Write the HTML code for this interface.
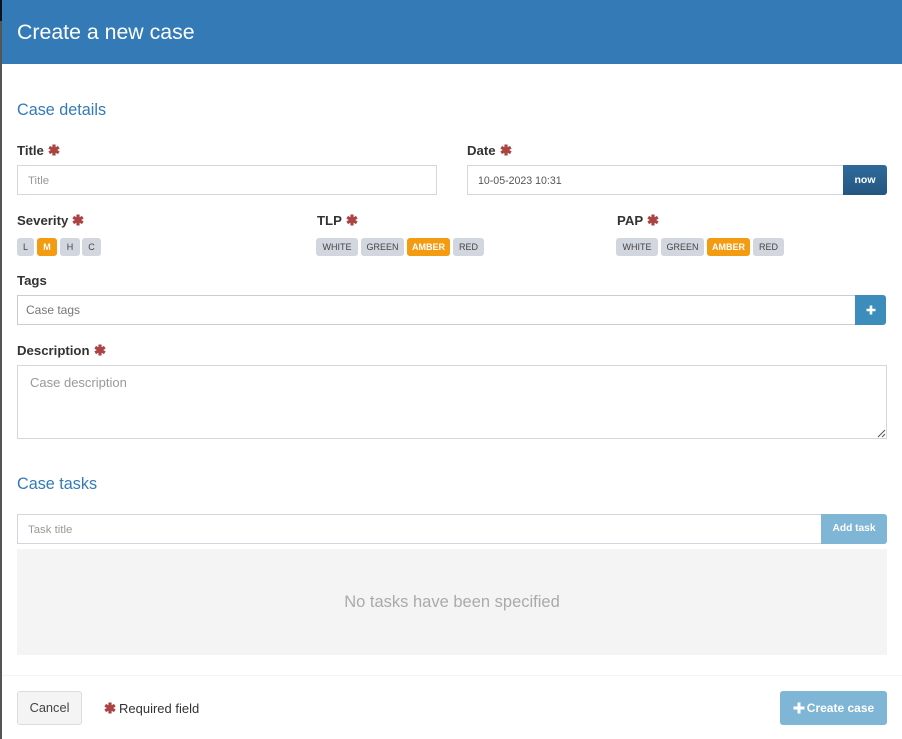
<!DOCTYPE html>
<html><head><meta charset="utf-8"><style>
*{box-sizing:border-box}
html,body{margin:0;padding:0;width:902px;height:739px;overflow:hidden;background:#fff;font-family:"Liberation Sans",sans-serif}
.a{position:absolute;white-space:nowrap}
.t{display:flex;align-items:center;line-height:1}
.lb{font-weight:bold;font-size:13.2px;color:#333;height:20px;margin-top:1px}
.h{font-size:16.2px;color:#337ab7;height:24px}
.in{background:#fff;border:1px solid #d2d6de;height:30px;display:flex;align-items:center;color:#999;font-size:11.4px;padding-top:1px}
.p{top:238px;height:18px;border-radius:3px;background:#d2d6de;color:#444;font-size:9px;display:flex;align-items:center;justify-content:center}
.on{background:#f39c12;color:#fff;font-weight:bold}
.r{display:inline-block;margin-left:4px;position:relative;top:-1px}
</style></head><body>
<div class="a" style="left:0;top:0;width:2px;height:739px;background:#555"></div>
<div class="a" style="left:0;top:0;width:2px;height:21px;background:#0a1420"></div>
<div class="a" style="left:2px;top:0;width:900px;height:64px;background:#337ab7"></div>
<div class="a t" style="left:2px;top:1px;width:900px;height:63px;color:#fff;font-size:21.3px;padding-left:15px">Create a new case</div>

<svg width="0" height="0" style="position:absolute"><defs><g id="s"><path d="M6 0.5V11.5M1.2 3.2L10.8 8.8M10.8 3.2L1.2 8.8" stroke="#a94442" stroke-width="3.2" fill="none"/></g></defs></svg>

<div class="a t h" style="left:17px;top:98px">Case details</div>

<div class="a t lb" style="left:17px;top:140px">Title<svg class="r" width="12" height="12"><use href="#s"/></svg></div>
<div class="a in" style="left:17px;top:165px;width:420px;padding-left:10px">Title</div>

<div class="a t lb" style="left:467px;top:140px">Date<svg class="r" width="12" height="12"><use href="#s"/></svg></div>
<div class="a in" style="left:467px;top:165px;width:377px;padding-left:10px;color:#555;font-size:10.6px">10-05-2023 10:31</div>
<div class="a t" style="left:843px;top:165px;width:44px;height:30px;background:linear-gradient(#2f6a9c,#24567f);border-radius:0 3px 3px 0;color:#fff;font-size:10.5px;font-weight:bold;justify-content:center">now</div>

<div class="a t lb" style="left:17px;top:210px">Severity<svg class="r" width="12" height="12"><use href="#s"/></svg></div>
<div class="a p" style="left:17px;width:17px">L</div>
<div class="a p on" style="left:37px;width:20px">M</div>
<div class="a p" style="left:60px;width:20px">H</div>
<div class="a p" style="left:82px;width:19px">C</div>

<div class="a t lb" style="left:317px;top:210px">TLP<svg class="r" width="12" height="12"><use href="#s"/></svg></div>
<div class="a p" style="left:316px;width:42px">WHITE</div>
<div class="a p" style="left:361px;width:43px">GREEN</div>
<div class="a p on" style="left:407px;width:43px">AMBER</div>
<div class="a p" style="left:453px;width:31px">RED</div>

<div class="a t lb" style="left:617px;top:210px">PAP<svg class="r" width="12" height="12"><use href="#s"/></svg></div>
<div class="a p" style="left:616px;width:42px">WHITE</div>
<div class="a p" style="left:661px;width:43px">GREEN</div>
<div class="a p on" style="left:707px;width:43px">AMBER</div>
<div class="a p" style="left:753px;width:31px">RED</div>

<div class="a t lb" style="left:17px;top:270px">Tags</div>
<div class="a in" style="left:17px;top:295px;width:839px;padding:0 0 0 8px;border-color:#ccc;color:#777;font-size:12px">Case tags</div>
<div class="a t" style="left:855px;top:295px;width:31px;height:30px;background:#3c8dbc;border-radius:0 3px 3px 0;justify-content:center"><svg width="10" height="10"><path d="M5 0.5V9.5M0.5 5H9.5" stroke="#fff" stroke-width="2.6"/></svg></div>

<div class="a t lb" style="left:17px;top:340px">Description<svg class="r" width="12" height="12"><use href="#s"/></svg></div>
<div class="a in" style="left:17px;top:365px;width:870px;height:74px;padding:9px 0 0 12px;align-items:flex-start;font-size:13px">Case description</div>
<svg class="a" style="left:876px;top:428px" width="10" height="10"><path d="M9 2L2 9M9 6L6 9" stroke="#555" stroke-width="1"/></svg>

<div class="a t h" style="left:17px;top:472px">Case tasks</div>

<div class="a in" style="left:17px;top:514px;width:805px;padding-left:10px">Task title</div>
<div class="a t" style="left:821px;top:514px;width:66px;height:30px;background:#7fb5d5;border-radius:0 3px 3px 0;color:#fff;font-size:10.2px;font-weight:bold;justify-content:center">Add task</div>

<div class="a t" style="left:17px;top:549px;width:870px;height:106px;background:#f4f4f4;color:#aaa;font-size:16.5px;justify-content:center">No tasks have been specified</div>

<div class="a" style="left:2px;top:675px;width:900px;height:1px;background:#f4f4f4"></div>

<div class="a t" style="left:17px;top:691px;width:65px;height:34px;background:#f4f4f4;border:1px solid #ddd;border-radius:3px;color:#444;font-size:12.8px;justify-content:center">Cancel</div>
<svg class="a" style="left:104px;top:702px" width="12" height="12"><use href="#s"/></svg>
<div class="a t" style="left:119px;top:698px;height:20px;color:#333;font-size:13px">Required field</div>
<div class="a t" style="left:780px;top:691px;width:107px;height:34px;background:#7fb5d5;border-radius:3px;color:#fff;font-size:12px;font-weight:bold;justify-content:center"><svg width="12" height="12" style="margin-right:2px"><path d="M6 0.5V11.5M0.5 6H11.5" stroke="#fff" stroke-width="3"/></svg>Create case</div>
</body></html>
